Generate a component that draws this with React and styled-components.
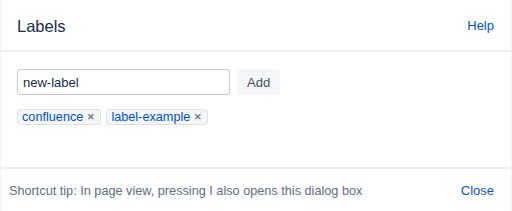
import React from 'react';
import styled, { createGlobalStyle } from 'styled-components';

const Global = createGlobalStyle`
  html, body { margin: 0; padding: 0; background: #fff; }
  body { font-family: "Liberation Sans", Arial, sans-serif; }
`;

const Dialog = styled.div`
  width: 512px;
  height: 211px;
  box-sizing: border-box;
  display: flex;
  flex-direction: column;
  background: #fff;
  border-left: 1px solid #f1f2f4;
  border-right: 1px solid #f1f2f4;
`;

const Header = styled.div`
  height: 50px;
  flex: none;
  display: flex;
  align-items: center;
  justify-content: space-between;
  padding: 0 17px 0 16px;
  border-bottom: 2px solid #ebecf0;
`;

const Title = styled.h2`
  margin: 0;
  font-size: 16.5px;
  font-weight: 500;
  color: #172b4d;
  padding-top: 2px;
`;

const Link = styled.a`
  color: #0052cc;
  font-size: 13px;
  text-decoration: none;
  cursor: pointer;
`;

const Body = styled.div`
  flex: 1;
  padding: 17px 16px 0;
  display: flex;
  flex-direction: column;
  gap: 14px;
`;

const InputRow = styled.div`
  display: flex;
  gap: 7px;
`;

const Input = styled.input`
  width: 213px;
  height: 26px;
  box-sizing: border-box;
  border: 1px solid #c1c7d0;
  border-radius: 3px;
  padding: 0 5px;
  font-family: inherit;
  font-size: 13px;
  color: #172b4d;
  outline: none;
`;

const Button = styled.button`
  height: 26px;
  padding: 0 10px;
  border: none;
  border-radius: 3px;
  background: #f4f5f7;
  color: #42526e;
  font-family: inherit;
  font-size: 13px;
`;

const Tags = styled.div`
  display: flex;
  gap: 5px;
`;

const Tag = styled.span`
  display: inline-flex;
  align-items: center;
  gap: 4px;
  height: 14px;
  padding: 0 5px 0 4px;
  background: #f4f5f7;
  border: 1px solid #dfe1e6;
  border-radius: 3px;
  color: #0052cc;
  font-size: 12.7px;
`;

const Remove = styled.span`
  color: #6b778c;
  font-size: 9px;
  font-weight: 700;
`;

const Footer = styled.div`
  height: 41px;
  flex: none;
  display: flex;
  align-items: center;
  justify-content: space-between;
  padding: 1px 17px 0 8px;
  border-top: 2px solid #ebecf0;
`;

const Tip = styled.span`
  font-size: 12.7px;
  color: #5e6c84;
`;

const App = () => (
  <>
    <Global />
    <Dialog>
      <Header>
        <Title>Labels</Title>
        <Link>Help</Link>
      </Header>
      <Body>
        <InputRow>
          <Input defaultValue="new-label" />
          <Button>Add</Button>
        </InputRow>
        <Tags>
          <Tag>confluence <Remove>✕</Remove></Tag>
          <Tag>label-example <Remove>✕</Remove></Tag>
        </Tags>
      </Body>
      <Footer>
        <Tip>Shortcut tip: In page view, pressing I also opens this dialog box</Tip>
        <Link>Close</Link>
      </Footer>
    </Dialog>
  </>
);

export default App;
